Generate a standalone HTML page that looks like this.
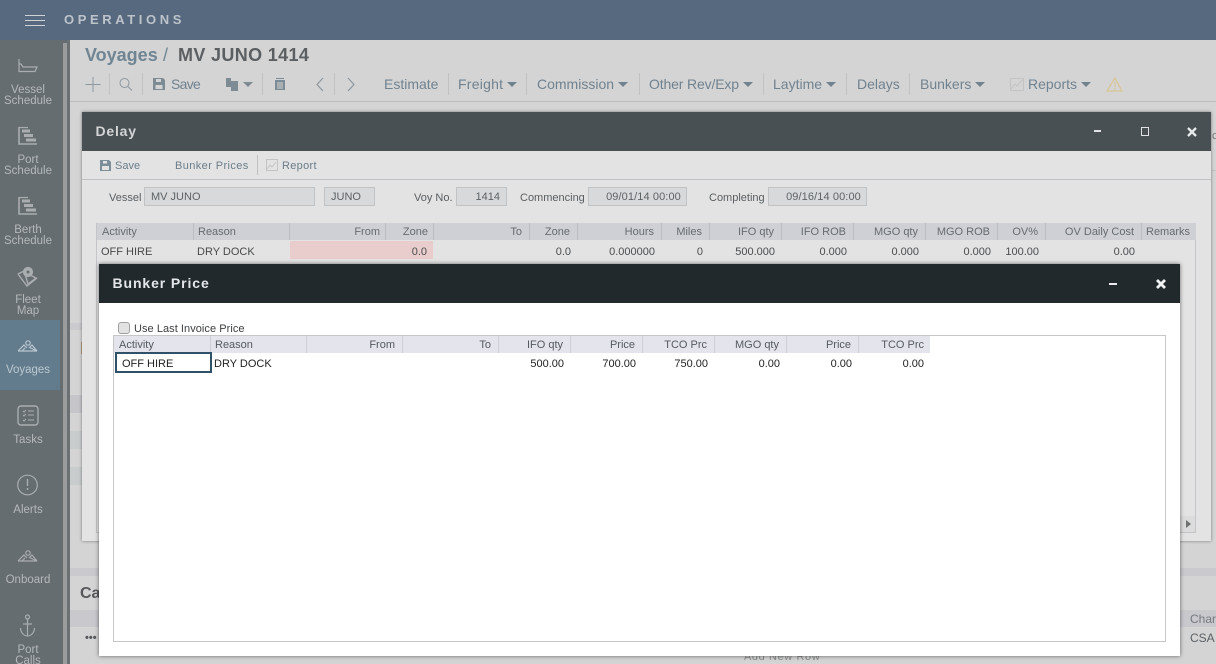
<!DOCTYPE html>
<html><head><meta charset="utf-8"><style>
html,body{margin:0;padding:0;width:1216px;height:664px;overflow:hidden;background:#d4d4d4}
body{font-family:"Liberation Sans",sans-serif;position:relative}
div,span.a{position:absolute}
.t{position:absolute;white-space:nowrap;line-height:14px}
.r{text-align:right}
.nav{position:absolute;left:0;width:56px;text-align:center;color:#b4b8ba;font-size:11.5px;line-height:11px}
.tb{position:absolute;top:76px;font-size:14px;color:#71828f;white-space:nowrap;line-height:17px}
.sep{position:absolute;width:1px;background:#c2c2c2}
.car{display:inline-block;width:0;height:0;border-left:5px solid transparent;border-right:5px solid transparent;border-top:5px solid #71828f;vertical-align:2px;margin-left:4px}
.hc{position:absolute;height:17px;background:#cfd0d6;border-right:1px solid #bcbdc3;font-size:11px;line-height:19px;color:#666c70;box-sizing:border-box;padding:0 5px;white-space:nowrap}
.hd{position:absolute;height:17px;background:#e3e4ec;border-right:1px solid #cdced6;font-size:11px;line-height:19px;color:#555a60;box-sizing:border-box;padding:0 4px;white-space:nowrap}
.in{position:absolute;height:19px;top:187px;background:#d8d9da;border:1px solid #c0c2c4;box-sizing:border-box;font-size:11px;line-height:19px;color:#5c6266;white-space:nowrap}
.c{position:absolute;font-size:11px;line-height:14px;color:#4a4d50;white-space:nowrap;text-align:right}
.d{position:absolute;font-size:11px;line-height:14px;color:#222;white-space:nowrap;text-align:right}
svg{position:absolute;overflow:visible}
</style></head><body>
<!-- top bar -->
<div style="left:0;top:0;width:1216px;height:40px;background:#56697f"></div>
<div style="left:25px;top:14.500px;width:20px;height:1.500px;background:#d0d4d9"></div>
<div style="left:25px;top:19.500px;width:20px;height:1.500px;background:#d0d4d9"></div>
<div style="left:25px;top:24.500px;width:20px;height:1.500px;background:#d0d4d9"></div>
<span class="t" style="left:64px;top:13px;font-size:13px;font-weight:bold;letter-spacing:3.600px;color:#bdc3ca">OPERATIONS</span>

<!-- sidebar -->
<div style="left:0;top:40px;width:70px;height:624px;background:#666d70"></div>
<div style="left:63px;top:43px;width:4px;height:621px;background:#9a9c9d"></div>
<div style="left:67px;top:40px;width:3px;height:624px;background:#6b7073"></div>
<div style="left:0;top:320px;width:60px;height:70px;background:#627c8d"></div>

<svg style="left:0;top:0" width="70" height="664" fill="none" stroke="#a9adaf" stroke-width="1.200">
<path d="M19 59v5h2l2 3h14l-2 4.500H19v-7"/>
<path d="M19 127v17h18" stroke-width="1.600"/><path d="M19 127.500h9" stroke-width="1.200"/><path d="M22 131h8M24 135.500h9M26 140h10" stroke-width="3"/>
<path d="M19 197v17h18" stroke-width="1.600"/><path d="M19 197.500h9" stroke-width="1.200"/><path d="M22 201h8M24 205.500h9M26 210h10" stroke-width="3"/>
<path d="M18 274l6-3 4 13 8-6-6-3M18 274l9 12 10-8" stroke-width="1.400"/><circle cx="28" cy="272" r="4.500" fill="#a9adaf"/><circle cx="28" cy="272" r="1.500" fill="#666d70" stroke="none"/>
<path d="M18 351l6-6 3 3M29.500 347.500l2.500-2.500 5 6zM18 351h19M22 351l3-3" stroke="#bac6ce"/><circle cx="28" cy="343" r="2.200" stroke="#bac6ce"/>
<rect x="18" y="406" width="20" height="19" rx="3" stroke-width="1.400"/><path d="M23 411l1 1 2-2M23 415l1 1 2-2M23 420l1 1 2-2M28 411h6M28 415h6M28 420h6" stroke-width="1"/>
<circle cx="27.500" cy="485" r="9.800" stroke-width="1.200"/><path d="M27.500 479v7M27.500 488v2" stroke-width="1.400"/>
<path d="M18 561l6-6 3 3M29.500 557.500l2.500-2.500 5 6zM18 561h19M22 561l3-3"/><circle cx="28" cy="553" r="2.200"/>
<circle cx="27.500" cy="617" r="2"/><path d="M27.500 619v17M23 624h9M20.500 628c0 5 4 8 7 8s7-3 7-8"/>
</svg>
<div class="nav" style="top:85px">Vessel<br>Schedule</div>
<div class="nav" style="top:155px">Port<br>Schedule</div>
<div class="nav" style="top:225px">Berth<br>Schedule</div>
<div class="nav" style="top:295px">Fleet<br>Map</div>
<div class="nav" style="top:365px;color:#bcc8d0">Voyages</div>
<div class="nav" style="top:435px">Tasks</div>
<div class="nav" style="top:505px">Alerts</div>
<div class="nav" style="top:575px">Onboard</div>
<div class="nav" style="top:645px">Port<br>Calls</div>

<!-- page head -->
<span class="t" style="left:85px;top:46px;font-size:18px;line-height:19px;font-weight:bold;color:#6f8594">Voyages</span>
<span class="t" style="left:163px;top:46px;font-size:18px;line-height:19px;color:#6f8594">/</span>
<span class="t" style="left:178px;top:46px;font-size:18px;line-height:19px;font-weight:bold;letter-spacing:.350px;color:#5c5f62">MV JUNO 1414</span>
<div style="left:70px;top:101px;width:1146px;height:1px;background:#bdbdbd"></div>

<svg style="left:0;top:0" width="400" height="100" fill="none" stroke="#8d979e" stroke-width="1">
<path d="M93 77v15M85.500 84.500h15"/>
<circle cx="124.500" cy="83" r="4.500"/><path d="M128 86.500l4 4"/>
<path d="M153 78h10l2 2v10h-12z" fill="#7d8b95" stroke="none"/><path d="M156 79h5v3h-5zM155.500 85h7v4h-7z" fill="#d4d4d4" stroke="none"/>
<path d="M226 78h5v9h-5zM231 81h7v10h-7z" fill="#7d8b95" stroke="none"/>
<path d="M243 82h10l-5 5z" fill="#7d8b95" stroke="none"/>
<path d="M275 80h10v10h-10zM276 78h8v1h-8z" fill="#7d8b95" stroke="none"/><path d="M278 82v7M280 82v7M282 82v7" stroke="#d4d4d4"/>
<path d="M323 78l-6 6.500 6 6.500M348 78l6 6.500-6 6.500" stroke-width="1.200"/>
</svg>
<div class="sep" style="left:109px;top:73px;height:22px"></div>
<div class="sep" style="left:142px;top:73px;height:22px"></div>
<div class="sep" style="left:262px;top:73px;height:22px"></div>
<div class="sep" style="left:334px;top:73px;height:22px"></div>
<div class="sep" style="left:448px;top:73px;height:22px"></div>
<div class="sep" style="left:526px;top:73px;height:22px"></div>
<div class="sep" style="left:639px;top:73px;height:22px"></div>
<div class="sep" style="left:763px;top:73px;height:22px"></div>
<div class="sep" style="left:846px;top:73px;height:22px"></div>
<div class="sep" style="left:909px;top:73px;height:22px"></div>
<span class="tb" style="left:171px;letter-spacing:-.700px">Save</span>
<span class="tb" style="left:384px">Estimate</span>
<span class="tb" style="left:458px;letter-spacing:.250px">Freight<i class="car"></i></span>
<span class="tb" style="left:537px">Commission<i class="car"></i></span>
<span class="tb" style="left:649px;letter-spacing:-.150px">Other Rev/Exp<i class="car"></i></span>
<span class="tb" style="left:773px">Laytime<i class="car"></i></span>
<span class="tb" style="left:857px">Delays</span>
<span class="tb" style="left:920px">Bunkers<i class="car"></i></span>
<span class="tb" style="left:1028px">Reports<i class="car"></i></span>
<svg style="left:1000px;top:70px" width="130" height="30" fill="none">
<path d="M10.500 8.500h13v12h-13zM11 19l4-5 2 2 5-6" stroke="#c4c4c4"/>
<path d="M115 8l7 13h-15z" stroke="#d8c590" stroke-width="1.200"/><path d="M115 12v5M115 18v1.500" stroke="#d8c590"/>
</svg>

<!-- background page bits -->
<div style="left:70px;top:323px;width:12px;height:7px;background:#cbcbcf"></div>
<div style="left:81px;top:342px;width:1px;height:12px;background:#b9a37f"></div>
<div style="left:70px;top:395px;width:12px;height:18px;background:#c5c5ca"></div>
<div style="left:70px;top:431px;width:12px;height:18px;background:#c8cccd"></div>
<div style="left:70px;top:467px;width:12px;height:18px;background:#c8cccd"></div>
<div style="left:70px;top:568px;width:30px;height:8px;background:#c9c9ce"></div>
<div style="left:1180px;top:568px;width:36px;height:8px;background:#c9c9ce"></div>
<span class="t" style="left:80px;top:586px;font-size:16px;line-height:16px;font-weight:bold;color:#56585b">Ca</span>
<div style="left:70px;top:610px;width:30px;height:17px;background:#c8c8cd"></div>
<span class="t" style="left:85px;top:631px;font-size:11px;font-weight:bold;color:#55585b">•••</span>
<div style="left:1180px;top:610px;width:36px;height:17px;background:#c8c8cd"></div>
<span class="t" style="left:1190px;top:612px;font-size:12px;color:#767a80">Char</span>
<span class="t" style="left:1190px;top:631px;font-size:12px;color:#5c6064">CSA</span>
<span class="t" style="left:744px;top:650px;font-size:11px;letter-spacing:.600px;color:#8a8c8e">Add New Row</span>
<div style="left:1212px;top:170px;width:4px;height:1px;background:#c4c4c4"></div>
<span class="t" style="left:1212px;top:129px;font-size:11px;color:#777">c</span>

<!-- Delay window -->
<div style="left:82px;top:112px;width:1129px;height:429px;background:#e3e3e3;box-shadow:0 0 3px rgba(0,0,0,.45)"></div>
<div style="left:82px;top:112px;width:1129px;height:39px;background:#495053"></div>
<span class="t" style="left:95.500px;top:124px;font-size:14px;font-weight:bold;letter-spacing:.800px;color:#d3d5d6">Delay</span>
<div style="left:1094px;top:130px;width:7px;height:2px;background:#dfe1e2"></div>
<div style="left:1141px;top:127px;width:6px;height:7px;border:1px solid #dfe1e2"></div>
<svg style="left:1187px;top:127px" width="10" height="10"><path d="M1 1l8 8M9 1l-8 8" stroke="#e8e9ea" stroke-width="2.400"/></svg>
<div style="left:82px;top:179px;width:1129px;height:1px;background:#c0c1c4"></div>
<svg style="left:100px;top:160px" width="11" height="11"><path d="M0 0h9l2 2v9H0z" fill="#7d8e9b"/><path d="M3 1h4v2.500H3zM2 6h7v4H2z" fill="#e3e3e3"/></svg>
<span class="t" style="left:115px;top:159px;font-size:11px;color:#6b7d8a">Save</span>
<span class="t" style="left:175px;top:159px;font-size:11px;letter-spacing:.400px;color:#6b7d8a">Bunker Prices</span>
<div class="sep" style="left:257px;top:155px;height:20px"></div>
<svg style="left:266px;top:159px" width="12" height="12" fill="none"><path d="M.500.500h11v11H.500zM1 10l3-4 2 2 4-5" stroke="#c4c4c4"/></svg>
<span class="t" style="left:282px;top:159px;font-size:11px;letter-spacing:.300px;color:#6b7d8a">Report</span>

<span class="t" style="left:109px;top:191px;font-size:11px;color:#5a5e61">Vessel</span>
<div class="in" style="left:144px;width:171px;padding-left:6px">MV JUNO</div>
<div class="in" style="left:324px;width:51px;padding-left:6px">JUNO</div>
<span class="t" style="left:414px;top:191px;font-size:11px;color:#5a5e61">Voy No.</span>
<div class="in" style="left:456px;width:51px;padding-right:6px;text-align:right">1414</div>
<span class="t" style="left:520px;top:191px;font-size:11px;color:#5a5e61">Commencing</span>
<div class="in" style="left:588px;width:99px;text-align:center;padding-left:12px;letter-spacing:.100px">09/01/14 00:00</div>
<span class="t" style="left:709px;top:191px;font-size:11px;color:#5a5e61">Completing</span>
<div class="in" style="left:768px;width:99px;text-align:center;padding-left:12px;letter-spacing:.100px">09/16/14 00:00</div>

<!-- Delay grid -->
<div style="left:96px;top:223px;width:1100px;height:310px;border:1px solid #c4c5c8;box-sizing:border-box;border-top:0"></div>
<div class="hc" style="left:97px;top:223px;width:97px">Activity</div>
<div class="hc" style="left:194px;top:223px;width:96px;padding-left:4px">Reason</div>
<div class="hc r" style="left:290px;top:223px;width:96px">From</div>
<div class="hc r" style="left:386px;top:223px;width:48px">Zone</div>
<div class="hc r" style="left:434px;top:223px;width:96px;padding-right:7px">To</div>
<div class="hc r" style="left:530px;top:223px;width:48px;padding-right:7px">Zone</div>
<div class="hc r" style="left:578px;top:223px;width:84px;padding-right:7px">Hours</div>
<div class="hc r" style="left:662px;top:223px;width:48px;padding-right:7px">Miles</div>
<div class="hc r" style="left:710px;top:223px;width:72px;padding-right:7px">IFO qty</div>
<div class="hc r" style="left:782px;top:223px;width:72px;padding-right:7px">IFO ROB</div>
<div class="hc r" style="left:854px;top:223px;width:72px;padding-right:7px">MGO qty</div>
<div class="hc r" style="left:926px;top:223px;width:72px;padding-right:7px">MGO ROB</div>
<div class="hc r" style="left:998px;top:223px;width:48px;padding-right:7px">OV%</div>
<div class="hc r" style="left:1046px;top:223px;width:96px;padding-right:7px">OV Daily Cost</div>
<div class="hc" style="left:1142px;top:223px;width:54px;padding:0 4px;border-right:0">Remarks</div>
<div style="left:290px;top:241px;width:143px;height:18px;background:#e9cccc"></div>
<span class="t" style="left:101px;top:245px;font-size:11px;color:#47494b">OFF HIRE</span>
<span class="t" style="left:197px;top:245px;font-size:11px;color:#47494b">DRY DOCK</span>
<div class="c" style="left:387px;top:245px;width:40px">0.0</div>
<div class="c" style="left:531px;top:245px;width:40px">0.0</div>
<div class="c" style="left:579px;top:245px;width:76px">0.000000</div>
<div class="c" style="left:663px;top:245px;width:40px">0</div>
<div class="c" style="left:711px;top:245px;width:64px">500.000</div>
<div class="c" style="left:783px;top:245px;width:64px">0.000</div>
<div class="c" style="left:855px;top:245px;width:64px">0.000</div>
<div class="c" style="left:927px;top:245px;width:64px">0.000</div>
<div class="c" style="left:999px;top:245px;width:40px">100.00</div>
<div class="c" style="left:1047px;top:245px;width:88px">0.00</div>
<div style="left:1180px;top:516px;width:15px;height:16px;background:#dcdcdc"></div>
<div style="left:1186px;top:520px;width:0;height:0;border-left:5px solid #6d6f71;border-top:4px solid transparent;border-bottom:4px solid transparent"></div>

<!-- Bunker Price window -->
<div style="left:99px;top:264px;width:1081px;height:392px;background:#fff;box-shadow:0 0 4px rgba(0,0,0,.55)"></div>
<div style="left:99px;top:264px;width:1081px;height:39px;background:#22292d"></div>
<span class="t" style="left:112.500px;top:276px;font-size:14px;font-weight:bold;letter-spacing:.900px;color:#e4e7e9">Bunker Price</span>
<div style="left:1109px;top:283px;width:8px;height:2px;background:#e8eaeb"></div>
<svg style="left:1156px;top:279px" width="10" height="10"><path d="M1 1l8 8M9 1l-8 8" stroke="#f0f1f2" stroke-width="2.800"/></svg>
<div style="left:118px;top:322px;width:12px;height:12px;box-sizing:border-box;background:#e2e2e2;border:1px solid #a0a0a0;border-radius:3px"></div>
<span class="t" style="left:134px;top:322px;font-size:11px;letter-spacing:.050px;color:#3c3f42">Use Last Invoice Price</span>
<div style="left:113px;top:335px;width:1053px;height:307px;border:1px solid #c6c7c9;box-sizing:border-box"></div>
<div class="hd" style="left:114px;top:336px;width:97px;padding-left:5px">Activity</div>
<div class="hd" style="left:211px;top:336px;width:96px">Reason</div>
<div class="hd r" style="left:307px;top:336px;width:96px;padding-right:7px">From</div>
<div class="hd r" style="left:403px;top:336px;width:96px;padding-right:7px">To</div>
<div class="hd r" style="left:499px;top:336px;width:72px;padding-right:7px">IFO qty</div>
<div class="hd r" style="left:571px;top:336px;width:72px;padding-right:7px">Price</div>
<div class="hd r" style="left:643px;top:336px;width:72px;padding-right:7px">TCO Prc</div>
<div class="hd r" style="left:715px;top:336px;width:72px;padding-right:7px">MGO qty</div>
<div class="hd r" style="left:787px;top:336px;width:72px;padding-right:7px">Price</div>
<div class="hd r" style="left:859px;top:336px;width:71px;padding-right:6px;border-right:0">TCO Prc</div>
<div style="left:115px;top:352px;width:97px;height:21px;border:2px solid #2f5269;box-sizing:border-box"></div>
<span class="t" style="left:122px;top:357px;font-size:11px;color:#222">OFF HIRE</span>
<span class="t" style="left:214px;top:357px;font-size:11px;color:#222">DRY DOCK</span>
<div class="d" style="left:500px;top:357px;width:64px">500.00</div>
<div class="d" style="left:572px;top:357px;width:64px">700.00</div>
<div class="d" style="left:644px;top:357px;width:64px">750.00</div>
<div class="d" style="left:716px;top:357px;width:64px">0.00</div>
<div class="d" style="left:788px;top:357px;width:64px">0.00</div>
<div class="d" style="left:860px;top:357px;width:64px">0.00</div>
</body></html>
